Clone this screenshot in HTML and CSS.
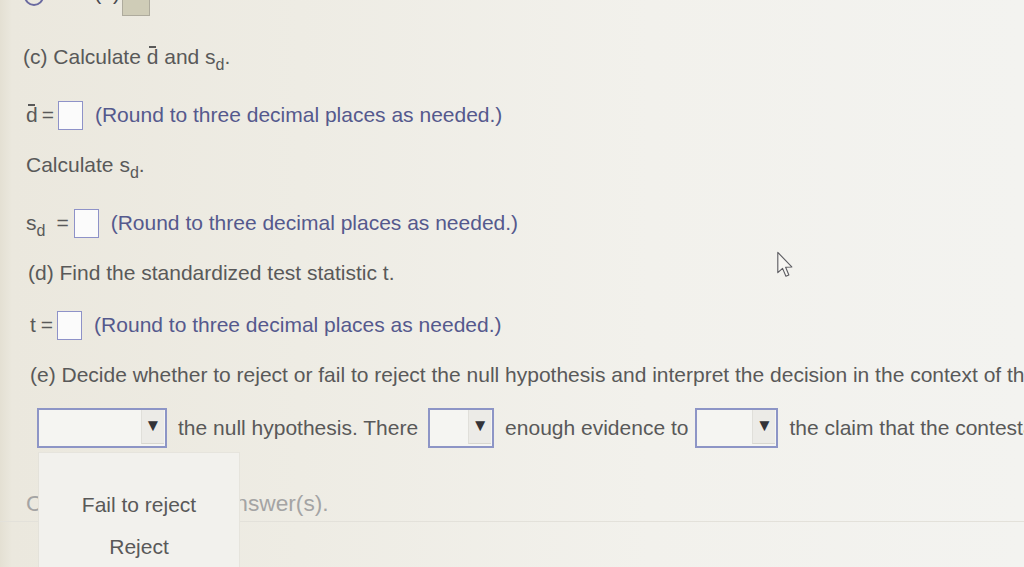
FILE: index.html
```html
<!DOCTYPE html>
<html>
<head>
<meta charset="utf-8">
<title>Paired t-test</title>
<link rel="stylesheet" href="styles.css">
</head>
<body>
<div class="page">
  <div class="row top">
    <span class="radio"></span>
    <span class="frag">=</span>
    <span class="frag paren">(&nbsp;&nbsp;)</span>
    <span class="gbox"></span>
  </div>

  <div class="row r-c"><span>(c) Calculate <span class="dbar">d</span> and s<sub>d</sub>.</span></div>

  <div class="row r-dbar">
    <span class="dbar">d</span><span class="eq">=</span><span class="ans"></span>
    <span class="hint">(Round to three decimal places as needed.)</span>
  </div>

  <div class="row r-calc"><span>Calculate s<sub>d</sub>.</span></div>

  <div class="row r-sd">
    <span class="sd">s<sub>d</sub></span><span class="eq eq-wide">=</span><span class="ans"></span>
    <span class="hint">(Round to three decimal places as needed.)</span>
  </div>

  <div class="row r-d">(d) Find the standardized test statistic t.</div>

  <div class="row r-t">
    <span class="tvar">t</span><span class="eq">=</span><span class="ans"></span>
    <span class="hint">(Round to three decimal places as needed.)</span>
  </div>

  <div class="row r-e"><span class="clip">(e) Decide whether to reject or fail to reject the null hypothesis and interpret the decision in the context of the original claim.</span></div>

  <div class="row r-dd">
    <span class="select s1"><span class="btn">&#9660;</span></span>
    <span class="txt">the null hypothesis. There</span>
    <span class="select s2"><span class="btn">&#9660;</span></span>
    <span class="txt txt-tight">enough evidence to</span>
    <span class="select s3"><span class="btn">&#9660;</span></span>
    <span class="txt">the claim that the contestants</span>
  </div>

  <div class="row r-info">Click to select your answer(s).</div>

  <div class="menu">
    <div class="opt">Fail to reject</div>
    <div class="opt">Reject</div>
  </div>

  <svg class="cursor" width="19" height="28" viewBox="0 0 13 20">
    <path d="M1 1 L1 15.5 L4.4 12.4 L6.8 18 L8.9 17.1 L6.6 11.6 L11 11.4 Z" fill="#f7f6f2" stroke="#5d5d62" stroke-width="0.8" stroke-linejoin="round"/>
  </svg>
</div>
</body>
</html>
```

FILE: styles.css
```css
html, body {
  margin: 0;
  padding: 0;
}

body {
  width: 1024px;
  height: 567px;
  overflow: hidden;
  background: linear-gradient(90deg, #e4e0d3 0px, #ebe8de 12px, #eeece4 300px, #f2f1ec 650px, #f3f3f0 1024px);
  font-family: "Liberation Sans", Arial, sans-serif;
  font-size: 21px;
  color: #595959;
}

.page {
  position: relative;
  height: 567px;
  overflow: hidden;
  display: flex;
  flex-direction: column;
  padding-left: 26px;
}

.row {
  display: flex;
  align-items: center;
  height: 40px;
  white-space: nowrap;
  flex-shrink: 0;
  min-width: 0;
}

sub {
  font-size: 16px;
  vertical-align: -6px;
  line-height: 0;
}

/* partially visible row at the top */
.top {
  height: 30px;
  margin-top: -15px;
  color: #4a4a50;
}
.radio {
  width: 16px;
  height: 16px;
  border: 2px solid #6a6aa0;
  border-radius: 50%;
  margin-top: -8px;
  margin-left: -2px;
  flex-shrink: 0;
}
.frag {
  margin-left: 14px;
  margin-top: -14px;
}
.paren {
  margin-left: 24px;
}
.gbox {
  width: 26px;
  height: 28px;
  margin-left: 2px;
  background: #cfccb7;
  border: 1px solid #aeab9d;
  margin-top: 1px;
  flex-shrink: 0;
}

.r-c { margin-top: 22px; margin-left: -3px; }
.r-dbar { margin-top: 18px; }
.r-calc { margin-top: 10px; }
.r-sd { margin-top: 18px; }
.r-d { margin-top: 10px; margin-left: 2px; }
.r-t { margin-top: 12px; margin-left: 2px; }
.r-e { margin-top: 10px; margin-left: 4px; }
.r-dd { margin-top: 12px; margin-left: 11px; height: 41px; }

.clip {
  overflow: hidden;
}

.dbar {
  position: relative;
}
.dbar::before {
  content: "";
  position: absolute;
  left: 2px;
  top: 1px;
  width: 7px;
  height: 2px;
  background: #595959;
}

.eq {
  margin-left: 4px;
  margin-right: 4px;
}
.eq-wide {
  margin-left: 11px;
  margin-right: 5px;
}
.tvar {
  margin-left: 2px;
  margin-right: 1px;
}

.ans {
  width: 23px;
  height: 27px;
  border: 1px solid #8e92c8;
  background: #fbfbfb;
  flex-shrink: 0;
}

.hint {
  margin-left: 12px;
  color: #55598d;
}

.select {
  height: 40px;
  border: 2px solid #8d95c6;
  background: #f5f5f2;
  display: flex;
  justify-content: flex-end;
  align-items: center;
  box-sizing: border-box;
  flex-shrink: 0;
}
.s1 { width: 130px; }
.s2 { width: 66px; }
.s3 { width: 83px; }

.btn {
  width: 23px;
  height: 34px;
  background: #ecebe7;
  border-left: 1px solid #e0dfda;
  border-bottom: 1px solid #d8d7d0;
  color: #333338;
  font-size: 17px;
  display: flex;
  align-items: center;
  justify-content: center;
  margin-right: 1px;
  margin-top: -2px;
  box-sizing: border-box;
}

.txt {
  margin: 0 10px 0 11px;
}
.txt-tight {
  margin-right: 7px;
}

.r-info {
  margin-top: 37px;
  height: 36px;
  margin-left: -26px;
  padding-left: 26px;
  border-bottom: 1px solid #e3e1da;
  color: #a4a4a4;
  font-size: 22.7px;
}

.menu {
  position: absolute;
  left: 38px;
  top: 452px;
  width: 202px;
  height: 130px;
  padding-top: 31px;
  box-sizing: border-box;
  background: #f2f1ed;
  border-left: 1px solid #e4e2da;
  border-right: 1px solid #e6e4dd;
  border-top: 1px solid #e6e4dd;
  color: #595959;
  font-size: 21px;
}
.opt {
  height: 42px;
  display: flex;
  align-items: center;
  justify-content: center;
}

.cursor {
  position: absolute;
  left: 776px;
  top: 251px;
}
```
